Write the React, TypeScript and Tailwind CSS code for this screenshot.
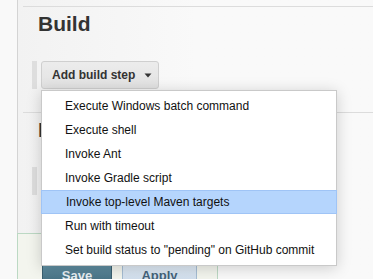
import React from "react";

const steps = [
  "Execute Windows batch command",
  "Execute shell",
  "Invoke Ant",
  "Invoke Gradle script",
  "Invoke top-level Maven targets",
  "Run with timeout",
  'Set build status to "pending" on GitHub commit',
];

const Caret = () => (
  <svg width="8" height="5" viewBox="0 0 8 5" className="ml-[9px]">
    <path d="M0.5 0.5h7L4 4.5z" fill="#333" />
  </svg>
);

const AddButton: React.FC<{ label: string }> = ({ label }) => (
  <div className="flex items-stretch ml-[9px] h-[28px]">
    <div className="w-[5px] bg-[#dedede]" />
    <div className="ml-[4px] w-[118px] flex items-center pl-[10px] rounded-[3px] border border-[#cfcfcf] bg-gradient-to-b from-[#ececec] to-[#e2e2e2] text-[12px] font-bold text-[#333]">
      {label}
      <Caret />
    </div>
  </div>
);

const Section: React.FC<{ title: string; button: string; className?: string }> = ({ title, button, className }) => (
  <div className={`ml-[5px] border-t border-[#dcdcdc] pt-[5px] ${className ?? ""}`}>
    <h2 className="pl-[15px] text-[21px] leading-[24px] font-bold text-[#333]">{title}</h2>
    <div className="mt-[25px]">
      <AddButton label={button} />
    </div>
  </div>
);

export default function App() {
  return (
    <div className="relative w-[373px] h-[279px] overflow-hidden bg-[#f9f9f9] font-['Liberation_Sans',Arial,sans-serif]">
      <div className="ml-[17px] h-full border-l border-[#d4d4d4] bg-gradient-to-r from-[#f2f2f2] via-[#f9f9f9] to-[#f9f9f9] flex flex-col">
        <Section title="Build" button="Add build step" className="mt-[6px]" />
        <Section title="Post-build Actions" button="Add post-build action" className="mt-[23px]" />
        <div className="-ml-px mt-[38px] w-[201px] flex-1 border border-[#bcd9c4] bg-[#f3f5ee] pt-[31px] pl-[24px] flex gap-[10px]">
          <button className="w-[70px] h-[22px] bg-gradient-to-b from-[#5f8ea1] to-[#3f6779] border border-[#3a5f70] text-[13px] font-bold text-[#e6eef2] leading-[18px]">
            Save
          </button>
          <button className="w-[75px] h-[22px] bg-gradient-to-b from-[#dde8f3] to-[#cddbea] border border-[#a6bdd3] text-[13px] font-bold text-[#44627a] leading-[18px]">
            Apply
          </button>
        </div>
      </div>

      <ul className="absolute left-[41px] top-[90px] w-[296px] py-[3px] bg-white border border-[#c9c9c9] shadow-[0_2px_14px_rgba(0,0,0,0.18)] text-[12px] text-[#111]">
        {steps.map((s, i) => (
          <li
            key={s}
            className={`h-[24px] flex items-center pl-[23px] ${
              i === 4 ? "-mx-px pl-[24px] bg-[#b5d5fd] border border-[#9fc4f6]" : ""
            }`}
          >
            {s}
          </li>
        ))}
      </ul>
    </div>
  );
}
